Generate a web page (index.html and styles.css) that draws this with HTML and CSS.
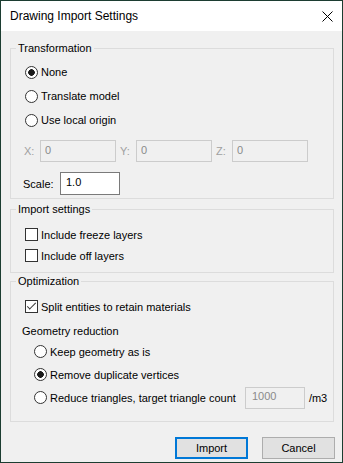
FILE: index.html
```html
<!DOCTYPE html>
<html lang="en">
<head>
    <meta charset="UTF-8">
    <title>Drawing Import Settings</title>
    <link rel="stylesheet" href="styles.css">
</head>
<body>
    <div class="window">
        <div class="titlebar">
            <span class="title">Drawing Import Settings</span>
            <span class="close">
                <svg width="11" height="11" viewBox="0 0 11 11">
                    <path d="M0.5 0.5 L10.5 10.5 M10.5 0.5 L0.5 10.5" stroke="#000" stroke-width="1" fill="none"/>
                </svg>
            </span>
        </div>

        <div class="content">
            <fieldset class="group group-transform">
                <legend>Transformation</legend>
                <label class="radio-row"><input type="radio" name="transform" checked> None</label>
                <label class="radio-row"><input type="radio" name="transform"> Translate model</label>
                <label class="radio-row"><input type="radio" name="transform"> Use local origin</label>

                <div class="coords">
                    <label class="coord"><span class="coord-label">X:</span><input type="text" value="0" disabled></label>
                    <label class="coord"><span class="coord-label">Y:</span><input type="text" value="0" disabled></label>
                    <label class="coord"><span class="coord-label">Z:</span><input type="text" value="0" disabled></label>
                </div>

                <div class="scale-row">
                    <label for="scale">Scale:</label>
                    <input type="text" id="scale" value="1.0">
                </div>
            </fieldset>

            <fieldset class="group group-import">
                <legend>Import settings</legend>
                <label class="check-row"><input type="checkbox"> Include freeze layers</label>
                <label class="check-row"><input type="checkbox"> Include off layers</label>
            </fieldset>

            <fieldset class="group group-optim">
                <legend>Optimization</legend>
                <label class="check-row"><input type="checkbox" checked> Split entities to retain materials</label>
                <div class="sub-title">Geometry reduction</div>
                <label class="radio-row sub"><input type="radio" name="reduce"> Keep geometry as is</label>
                <label class="radio-row sub"><input type="radio" name="reduce" checked> Remove duplicate vertices</label>
                <div class="radio-row sub">
                    <label class="inline"><input type="radio" name="reduce"> Reduce triangles, target triangle count</label>
                    <input type="text" class="count" value="1000" disabled>
                    <span class="unit">/m3</span>
                </div>
            </fieldset>
        </div>

        <div class="buttons">
            <button class="btn btn-default">Import</button>
            <button class="btn">Cancel</button>
        </div>
    </div>
</body>
</html>
```

FILE: styles.css
```css
body {
    margin: 0;
    font-family: "Liberation Sans", Arial, sans-serif;
    font-size: 11px;
    color: #000;
}
.window {
    width: 343px;
    height: 463px;
    box-sizing: border-box;
    border: 1px solid #1c3d31;
    background-color: #f0f0f0;
    display: flex;
    flex-direction: column;
}
.titlebar {
    height: 30px;
    flex-shrink: 0;
    background-color: #fff;
    display: flex;
    align-items: center;
    justify-content: space-between;
    padding: 0 9px 0 9px;
}
.title {
    font-size: 12px;
}
.close svg {
    display: block;
    margin-top: 1px;
}
.content {
    padding: 9px 8px 0 9px;
}
.group {
    margin: 0;
    padding: 0 8px 0 5px;
    border: 1px solid #dcdcdc;
    min-inline-size: auto;
}
.group legend {
    padding: 0 2px;
    line-height: 16px;
}
.group-transform {
    padding-top: 4px;
    padding-bottom: 3px;
}
.group-import {
    margin-top: 2px;
    padding-top: 7px;
    padding-bottom: 6px;
}
.group-optim {
    padding-top: 7px;
    padding-bottom: 12px;
}
.radio-row,
.check-row {
    display: flex;
    align-items: center;
    gap: 3px;
    margin-left: 9px;
    white-space: nowrap;
}
.radio-row {
    height: 24px;
}
.check-row {
    height: 21px;
}
.radio-row.sub {
    height: 23px;
    margin-left: 18px;
}
.inline {
    display: flex;
    align-items: center;
    gap: 3px;
    flex-shrink: 0;
}
input[type="radio"] {
    appearance: none;
    width: 13px;
    height: 13px;
    margin: 0;
    border: 1px solid #333;
    border-radius: 50%;
    background-color: #fff;
    flex-shrink: 0;
}
input[type="radio"]:checked {
    background: radial-gradient(circle, #1a1a1a 0 3px, #fff 3.6px);
}
input[type="checkbox"] {
    appearance: none;
    width: 13px;
    height: 13px;
    margin: 0;
    border: 1px solid #333;
    background-color: #fff;
    flex-shrink: 0;
    display: flex;
    justify-content: center;
}
input[type="checkbox"]:checked::after {
    content: "";
    width: 8px;
    height: 3px;
    border-left: 1px solid #333;
    border-bottom: 1px solid #333;
    transform: rotate(-45deg);
    margin-top: 2px;
}
input[type="text"] {
    box-sizing: border-box;
    margin: 0;
    font-family: inherit;
    font-size: 11px;
    border: 1px solid #7a7a7a;
    background-color: #fff;
    padding: 0 4px;
    outline: none;
    flex-shrink: 0;
}
input[type="text"]:disabled {
    border-color: #cccccc;
    background-color: #f0f0f0;
    color: #8a8a8a;
}
.coords {
    display: flex;
    gap: 4px;
    margin-top: 8px;
    margin-left: 8px;
}
.coord {
    display: flex;
    align-items: center;
}
.coord-label {
    width: 16px;
    color: #a0a0a0;
}
.coord input {
    width: 76px;
    height: 22px;
    padding-bottom: 3px;
}
.scale-row {
    display: flex;
    align-items: center;
    margin-top: 10px;
    margin-left: 7px;
}
.scale-row label {
    width: 37px;
}
.scale-row input {
    width: 60px;
    height: 23px;
    padding-left: 5px;
    padding-bottom: 3px;
}
.sub-title {
    height: 17px;
    line-height: 17px;
    margin-top: 6px;
    margin-left: 6px;
}
.radio-row .count {
    width: 60px;
    height: 22px;
    margin-left: 6px;
    padding-left: 6px;
    padding-bottom: 3px;
}
.unit {
    margin-left: 1px;
}
.buttons {
    margin-top: auto;
    display: flex;
    justify-content: flex-end;
    gap: 14px;
    padding: 0 7px 3px 0;
}
.btn {
    box-sizing: border-box;
    width: 73px;
    height: 22px;
    margin: 0;
    padding: 0;
    font-family: inherit;
    font-size: 11px;
    color: #000;
    background-color: #e1e1e1;
    border: 1px solid #adadad;
}
.btn-default {
    border: 2px solid #0078d7;
}
```
